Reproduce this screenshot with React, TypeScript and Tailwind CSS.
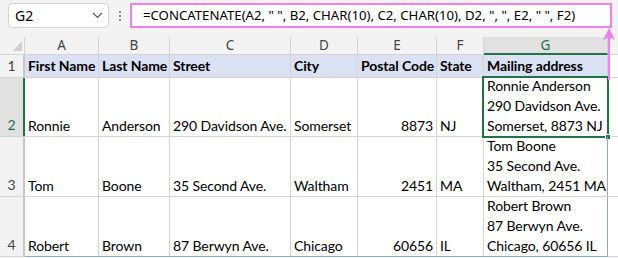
const cols = [74, 71, 121, 67, 79, 47, 124];
const letters = ["A", "B", "C", "D", "E", "F", "G"];

type Row = { n: number; h: number; cells: string[]; addr?: string[] };

const rows: Row[] = [
  { n: 2, h: 59, cells: ["Ronnie", "Anderson", "290 Davidson Ave.", "Somerset", "8873", "NJ"], addr: ["Ronnie Anderson", "290 Davidson Ave.", "Somerset, 8873 NJ"] },
  { n: 3, h: 60, cells: ["Tom", "Boone", "35 Second Ave.", "Waltham", "2451", "MA"], addr: ["Tom Boone", "35 Second Ave.", "Waltham, 2451 MA"] },
  { n: 4, h: 60, cells: ["Robert", "Brown", "87 Berwyn Ave.", "Chicago", "60656", "IL"], addr: ["Robert Brown", "87 Berwyn Ave.", "Chicago, 60656 IL"] },
];

const headers = ["First Name", "Last Name", "Street", "City", "Postal Code", "State", "Mailing address"];

const cellFont = { fontFamily: "Lato, 'Liberation Sans', sans-serif" };

export default function App() {
  return (
    <div className="relative w-[618px] h-[258px] overflow-hidden bg-white text-black" style={cellFont}>
      {/* Formula bar */}
      <div className="flex items-start h-[37px] bg-[#f3f3f3] pt-[3px] pl-[8px] pr-[6px]" style={{ fontFamily: "'Noto Sans', 'Open Sans', sans-serif" }}>
        <div className="flex items-center justify-between w-[101px] h-[25px] bg-white border border-[#d4d4d4] rounded-[4px] pl-[6px] pr-[5px] text-[14px] text-black">
          <span>G2</span>
          <svg width="11" height="7" viewBox="0 0 11 7" fill="none" stroke="#555" strokeWidth="1.2">
            <path d="M1 1l4.5 4.5L10 1" />
          </svg>
        </div>
        <div className="flex flex-col items-center justify-center gap-[2px] w-[21px] h-[25px]">
          <span className="w-[2px] h-[2px] bg-[#888]" />
          <span className="w-[2px] h-[2px] bg-[#888]" />
          <span className="w-[2px] h-[2px] bg-[#888]" />
        </div>
        <div className="flex items-center flex-1 h-[25px] bg-white border-2 border-[#f47ef0] pl-[11px] text-[13.2px] text-black whitespace-nowrap">
          =CONCATENATE(A2, " ", B2, CHAR(10), C2, CHAR(10), D2, ", ", E2, " ", F2)
        </div>
      </div>

      {/* Column headers */}
      <div className="flex h-[18px] bg-[#f3f3f3] border-b border-[#d4d4d4]">
        <div className="relative w-[25px] shrink-0 border-r border-[#d4d4d4]">
          <svg className="absolute right-[2px] bottom-[3px]" width="9" height="10" viewBox="0 0 9 10">
            <path d="M9 0V10H0Z" fill="#cfcfcf" />
          </svg>
        </div>
        {letters.map((l, i) => (
          <div
            key={l}
            className={
              "flex items-center justify-center shrink-0 text-[13.5px] border-r " +
              (l === "G"
                ? "bg-[#e1e1e1] text-[#217346] border-[#d4d4d4] border-b-2 border-b-[#217346] -mb-px"
                : "text-[#444] border-[#d4d4d4]")
            }
            style={{ width: cols[i], fontFamily: "'Noto Sans', sans-serif" }}
          >
            {l}
          </div>
        ))}
        <div className="flex-1" />
      </div>

      {/* Row 1 */}
      <div className="flex h-[23px] border-b border-[#d4d4d4]">
        <div className="flex items-end justify-center w-[25px] shrink-0 bg-[#f3f3f3] border-r-2 border-[#c8c8c8] text-[14px] text-[#444] pb-[1px]">1</div>
        {headers.map((h, i) => (
          <div
            key={h}
            className="flex items-end shrink-0 bg-[#d9e1f2] border-r border-[#d4d4d4] pl-[3px] pb-[1px] text-[14px] tracking-[-0.1px] font-bold whitespace-nowrap overflow-hidden leading-[20px]"
            style={{ width: cols[i] }}
          >
            {h}
          </div>
        ))}
        <div className="flex-1" />
      </div>

      {rows.map((r) => (
        <div key={r.n} className="flex border-b border-[#d4d4d4]" style={{ height: r.h }}>
          <div
            className={
              "flex items-end justify-center w-[25px] shrink-0 border-r-2 text-[14px] pb-[1px] " +
              (r.n === 2 ? "bg-[#e1e1e1] border-[#217346] text-[#217346]" : "bg-[#f3f3f3] border-[#c8c8c8] text-[#444]")
            }
          >
            {r.n}
          </div>
          {r.cells.map((c, i) => (
            <div
              key={i}
              className={
                "flex items-end shrink-0 border-r border-[#d4d4d4] text-[14px] tracking-[-0.1px] leading-[20px] whitespace-nowrap overflow-hidden " +
                (i === 4 ? "justify-end pr-[3px]" : "pl-[3px]")
              }
              style={{ width: cols[i] }}
            >
              {c}
            </div>
          ))}
          <div className="relative flex flex-col justify-end shrink-0 border-r border-[#8eaadb] pl-[3px] text-[14px] tracking-[-0.1px] leading-[20px] whitespace-nowrap" style={{ width: cols[6] }}>
            {r.addr!.map((a) => (
              <div key={a}>{a}</div>
            ))}
            {r.n === 2 && (
              <>
                <div className="absolute -left-[2px] -top-[2px] -right-[2px] -bottom-[2px] border-2 border-[#217346]" />
                <div className="absolute -right-[4px] -bottom-[4px] w-[6px] h-[6px] bg-[#217346] border border-white" />
              </>
            )}
          </div>
          <div className="flex-1" />
        </div>
      ))}

      {/* Bottom blue edge of the data range */}
      <div className="absolute left-[25px] top-[256px] w-[583px] h-px bg-[#8eaadb]" />

      {/* Pink arrow pointing to the formula bar */}
      <svg className="absolute left-[600px] top-[27px]" width="18" height="55" viewBox="0 0 18 55">
        <path d="M9 8V53" stroke="#f47ef0" strokeWidth="2" />
        <path d="M9 1L15 13L9 10L3 13Z" fill="#f47ef0" />
      </svg>
    </div>
  );
}
